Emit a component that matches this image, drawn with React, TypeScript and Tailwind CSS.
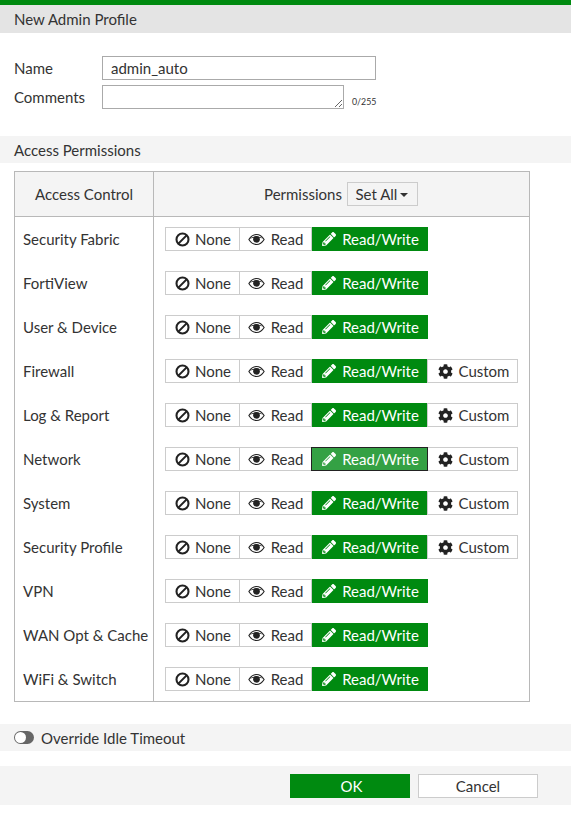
import { FaCog, FaPencilAlt } from 'react-icons/fa'

const rows = [
  { label: 'Security Fabric' },
  { label: 'FortiView' },
  { label: 'User & Device' },
  { label: 'Firewall', custom: true },
  { label: 'Log & Report', custom: true },
  { label: 'Network', custom: true, focused: true },
  { label: 'System', custom: true },
  { label: 'Security Profile', custom: true },
  { label: 'VPN' },
  { label: 'WAN Opt & Cache' },
  { label: 'WiFi & Switch' },
]

function BanIcon() {
  return (
    <svg viewBox="0 0 16 16" className="size-[15px] text-[#222]" fill="none" stroke="currentColor" strokeWidth="2.2">
      <circle cx="8" cy="8" r="6.4" />
      <path d="M3.6 12.4 12.4 3.6" />
    </svg>
  )
}

function EyeIcon() {
  return (
    <svg viewBox="0 0 18 14" className="h-[13px] w-[17px] text-[#222]">
      <path
        d="M0.8 7C3 3.4 6 1.6 9 1.6S15 3.4 17.2 7C15 10.6 12 12.4 9 12.4S3 10.6 0.8 7Z"
        fill="none"
        stroke="currentColor"
        strokeWidth="1.2"
      />
      <path d="M1.5 6.6C4 2.8 14 2.8 16.5 6.6 14 4.4 4 4.4 1.5 6.6Z" fill="currentColor" />
      <circle cx="9" cy="6.8" r="3.6" fill="currentColor" />
    </svg>
  )
}

function PermissionRow({ label, custom, focused }: { label: string; custom?: boolean; focused?: boolean }) {
  return (
    <div className="flex h-[44px] items-center">
      <div className="w-[139px] shrink-0 whitespace-nowrap pt-px pl-2">{label}</div>
      <div className="flex pl-[11px]">
        <div className="flex h-[24px] w-[75px] items-center justify-center gap-[5px] border border-[#ccc] pl-[1px]">
          <BanIcon />
          <span className="pt-px">None</span>
        </div>
        <div className="-ml-px flex h-[24px] w-[73px] items-center justify-center gap-[6px] border border-[#ccc]">
          <EyeIcon />
          <span className="pt-px">Read</span>
        </div>
        {focused ? (
          <div className="z-10 -ml-px flex h-[24px] w-[117px] items-center justify-center gap-[6px] border border-[#222] bg-[#34a144] pl-[2px] text-white">
            <FaPencilAlt className="size-[14px]" />
            <span className="pt-px">Read/Write</span>
          </div>
        ) : (
          <div className="flex h-[24px] w-[116px] items-center justify-center gap-[6px] bg-[#008a10] pl-[1px] text-white">
            <FaPencilAlt className="size-[14px]" />
            <span className="pt-px">Read/Write</span>
          </div>
        )}
        {custom && (
          <div className="-ml-px flex h-[24px] w-[91px] items-center justify-center gap-[6px] border border-[#ccc] pl-[2px]">
            <FaCog className="size-[15px] text-[#222]" />
            <span className="pt-px">Custom</span>
          </div>
        )}
      </div>
    </div>
  )
}

export default function App() {
  return (
    <div className="h-[814px] w-[571px] overflow-hidden bg-white font-['Lato',sans-serif] text-[15px] text-[#333]">
      <div className="h-[5px] bg-[#008a10]" />
      <div className="flex h-[28px] items-center bg-[#e4e4e4] pt-px pl-[14px]">New Admin Profile</div>

      <div className="mt-[23px] flex h-[24px] items-center pl-[14px]">
        <span className="w-[88px] pt-px">Name</span>
        <div className="flex h-[24px] w-[274px] items-center border border-[#aaa] pt-px pl-2">admin_auto</div>
      </div>
      <div className="mt-[5px] flex items-start pl-[14px]">
        <span className="w-[88px] pt-px">Comments</span>
        <textarea
          readOnly
          className="block h-[24px] w-[242px] border border-[#aaa] outline-none"
        />
        <span className="mt-[10px] ml-2 text-[8.8px]">0/255</span>
      </div>

      <div className="mt-[27px] flex h-[27px] items-center bg-[#f4f4f4] pt-px pl-[14px]">Access Permissions</div>

      <div className="mt-2 ml-[14px] w-[516px] border border-[#b8b8b8]">
        <div className="flex h-[45px] border-b border-[#b8b8b8] bg-[#f4f4f4]">
          <div className="flex w-[139px] shrink-0 items-center justify-center border-r border-[#b8b8b8] pt-px">
            Access Control
          </div>
          <div className="flex flex-1 items-center justify-center gap-[5px] pr-px">
            <span className="pt-px">Permissions</span>
            <div className="flex h-[24px] w-[71px] items-center justify-center gap-[3px] border border-[#ccc] pt-px pr-px">
              Set All
              <span className="border-x-[4px] border-t-[4px] border-x-transparent border-t-[#333]" />
            </div>
          </div>
        </div>
        <div className="relative">
          <div className="absolute top-0 bottom-0 left-[138px] w-px bg-[#b8b8b8]" />
          {rows.map((row) => (
            <PermissionRow key={row.label} {...row} />
          ))}
        </div>
      </div>

      <div className="mt-[22px] flex h-[27px] items-center gap-[7px] bg-[#f4f4f4] pl-[14px]">
        <div className="flex h-[13px] w-[20px] items-center rounded-full bg-[#666] pl-[1px]">
          <div className="size-[11px] rounded-full bg-white" />
        </div>
        <span className="pt-px">Override Idle Timeout</span>
      </div>

      <div className="mt-[15px] flex h-[39px] items-center justify-end gap-2 bg-[#f4f4f4] pr-[33px]">
        <div className="flex h-[24px] w-[120px] items-center justify-center bg-[#008a10] pt-px pl-[3px] text-white">OK</div>
        <div className="flex h-[24px] w-[120px] items-center justify-center border border-[#ccc] bg-white pt-px">Cancel</div>
      </div>
    </div>
  )
}
